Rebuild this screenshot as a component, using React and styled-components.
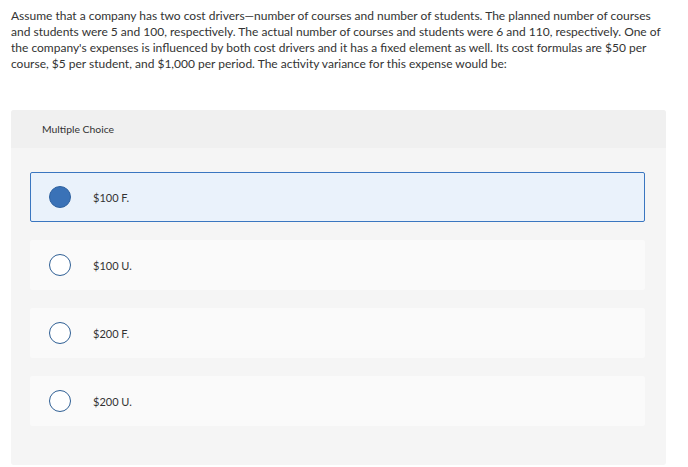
import React from "react";
import styled, { createGlobalStyle } from "styled-components";

const Global = createGlobalStyle`
  html, body { margin: 0; padding: 0; background: #fff; }
  body { font-family: Lato, "Open Sans", sans-serif; color: #333; }
`;

const Page = styled.div`
  padding: 8px 22px 0 11px;
  width: 688px;
  box-sizing: border-box;
`;

const Question = styled.p`
  margin: 0;
  font-size: 12px;
  line-height: 16px;
  color: #333;
`;

const Panel = styled.section`
  margin-top: 38px;
  width: 655px;
  border-radius: 3px;
  background: #f5f5f5;
  overflow: hidden;
`;

const Header = styled.div`
  height: 38px;
  background: #f0f0f0;
  display: flex;
  align-items: center;
  padding-left: 31px;
  font-size: 10.4px;
  color: #333;
`;

const List = styled.div`
  display: flex;
  flex-direction: column;
  gap: 18px;
  padding: 24px 21px 39px 19px;
`;

const Option = styled.label`
  height: 50px;
  box-sizing: border-box;
  display: flex;
  align-items: center;
  gap: 22px;
  padding-left: ${p => (p.$selected ? 18 : 19)}px;
  border-radius: 2px;
  background: ${p => (p.$selected ? "#eaf2fb" : "#fafafa")};
  border: ${p => (p.$selected ? "1px solid #3a76c0" : "none")};
  font-size: 11px;
  color: #333;
`;

const Radio = styled.span`
  width: 22px;
  height: 22px;
  box-sizing: border-box;
  border-radius: 50%;
  flex: none;
  background: ${p => (p.$selected ? "#3a72b7" : "#fff")};
  border: 1.5px solid ${p => (p.$selected ? "#2f62a0" : "#2f5f94")};
`;

const choices = ["$100 F.", "$100 U.", "$200 F.", "$200 U."];

export default function App() {
  return (
    <>
      <Global />
      <Page>
        <Question>
          Assume that a company has two cost drivers—number of courses and number of students. The planned number of courses and students were 5 and 100, respectively. The actual number of courses and students were 6 and 110, respectively. One of the company's expenses is influenced by both cost drivers and it has a fixed element as well. Its cost formulas are $50 per course, $5 per student, and $1,000 per period. The activity variance for this expense would be:
        </Question>
        <Panel>
          <Header>Multiple Choice</Header>
          <List>
            {choices.map((c, i) => (
              <Option key={c} $selected={i === 0}>
                <Radio $selected={i === 0} />
                {c}
              </Option>
            ))}
          </List>
        </Panel>
      </Page>
    </>
  );
}
